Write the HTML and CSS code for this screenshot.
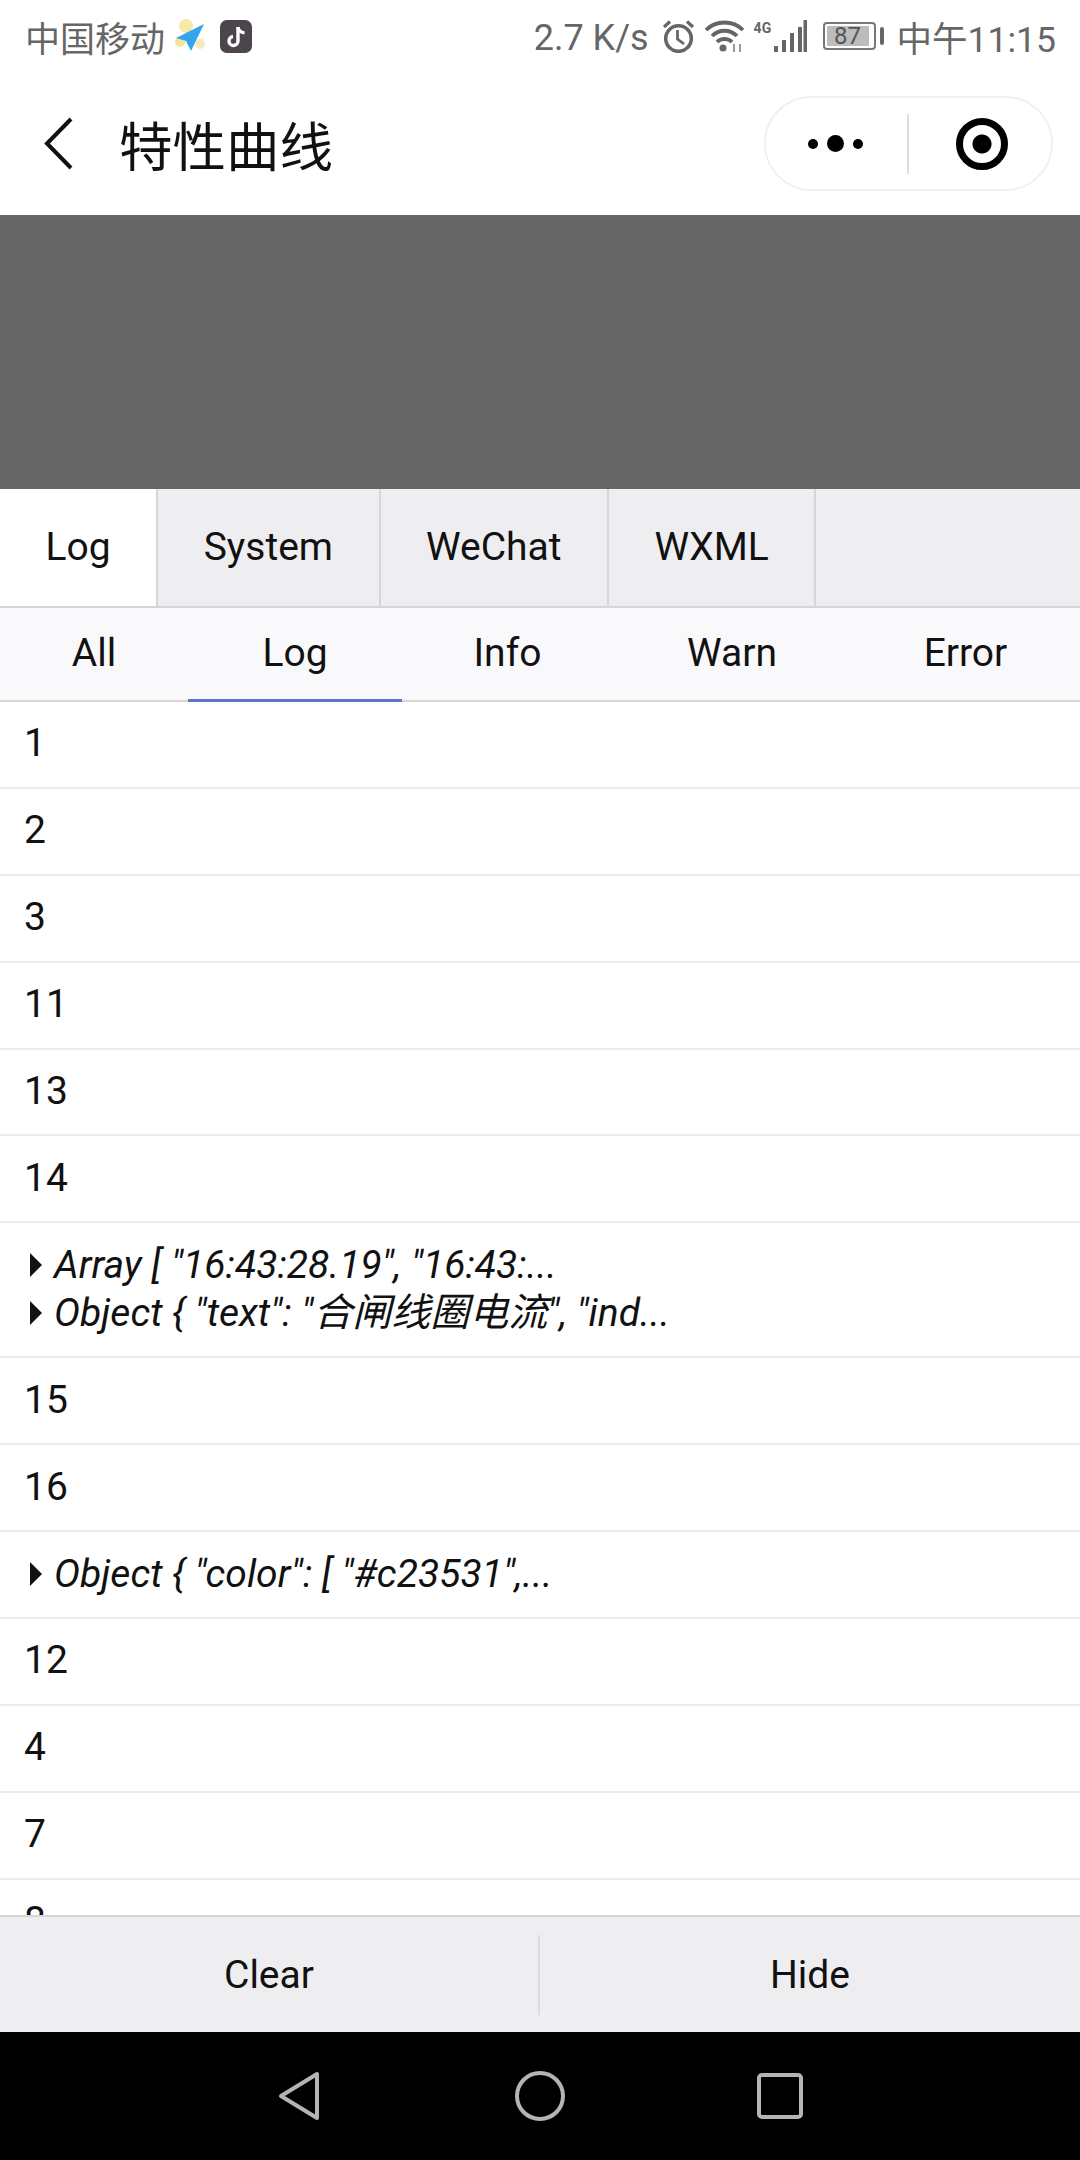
FILE: index.html
```html
<!DOCTYPE html>
<html lang="zh">
<head>
  <meta charset="UTF-8">
  <meta name="viewport" content="width=device-width, initial-scale=1.0">
  <title>特性曲线</title>
  <link rel="stylesheet" href="styles.css">
</head>
<body>
  <header class="status-bar">
    <div class="status-left">
      <span class="carrier">中国移动</span>
      <svg class="icon-plane" viewBox="0 0 30 38">
        <circle cx="11" cy="9" r="7" fill="#f6eaa8"/>
        <circle cx="5" cy="25" r="5" fill="#f5e49a"/>
        <circle cx="25" cy="27" r="5" fill="#f8e8c0"/>
        <path d="M29 7 L1 21 L11 24 L16 34 Z" fill="#35a4ea"/>
      </svg>
      <svg class="icon-tiktok" viewBox="0 0 32 33">
        <rect width="32" height="33" rx="7" fill="#4d454c"/>
        <path d="M18 7 V21 A4.5 4.5 0 1 1 13 16.5" fill="none" stroke="#fff" stroke-width="3.4"/>
        <path d="M18 7 C18.500 10.500 21 12.500 24.500 13" fill="none" stroke="#fff" stroke-width="3.2"/>
      </svg>
    </div>
    <div class="status-right">
      <span class="speed">2.7 K/s</span>
      <svg class="icon-alarm" viewBox="0 0 33 33">
        <circle cx="16.500" cy="18.500" r="12.800" fill="none" stroke="#666" stroke-width="3.600"/>
        <path d="M15.500 10 V19 L22 24" fill="none" stroke="#666" stroke-width="2.800"/>
        <path d="M2 7 L8 1.500 M31 7 L25 1.500" fill="none" stroke="#666" stroke-width="3.200"/>
      </svg>
      <svg class="icon-wifi" viewBox="0 0 41 32">
        <path d="M2 10 C12 0 29 0 39 10 M8 16 C15 9 26 9 33 16 M13 22 C17 18 24 18 28 22" fill="none" stroke="#666" stroke-width="3.800"/>
        <circle cx="19" cy="28" r="3.500" fill="#666"/>
        <path d="M30 24 V32 M36 24 V32" stroke="#999" stroke-width="2"/>
      </svg>
      <div class="signal">
        <span class="net">4G</span>
        <svg class="icon-signal" viewBox="0 0 34 32">
          <path d="M3 26 V32 M11 20 V32 M19 13 V32 M27 7 V32 M32.500 0 V32" stroke="#666" stroke-width="4"/>
        </svg>
      </div>
      <div class="battery">
        <div class="battery-body"><span class="battery-fill">87</span></div>
        <span class="battery-cap"></span>
      </div>
      <span class="clock">中午11:15</span>
    </div>
  </header>

  <nav class="title-bar">
    <div class="title-left">
      <svg class="icon-back" viewBox="0 0 29 53">
        <path d="M27 2 L3 26.500 L27 51" fill="none" stroke="#111" stroke-width="4"/>
      </svg>
      <span class="page-title">特性曲线</span>
    </div>
    <div class="capsule">
      <div class="capsule-part more">
        <span class="dot"></span>
        <span class="dot big"></span>
        <span class="dot"></span>
      </div>
      <span class="capsule-line"></span>
      <div class="capsule-part close">
        <span class="target"></span>
      </div>
    </div>
  </nav>

  <div class="mask"></div>

  <div class="tabs">
    <span class="tab active">Log</span>
    <span class="tab">System</span>
    <span class="tab">WeChat</span>
    <span class="tab">WXML</span>
  </div>

  <div class="subtabs">
    <span class="subtab">All</span>
    <span class="subtab active">Log</span>
    <span class="subtab">Info</span>
    <span class="subtab">Warn</span>
    <span class="subtab">Error</span>
  </div>

  <ul class="logs">
    <li>1</li>
    <li>2</li>
    <li>3</li>
    <li>11</li>
    <li>13</li>
    <li>14</li>
    <li class="multi">
      <div class="fold">Array [ "16:43:28.19", "16:43:...</div>
      <div class="fold">Object { "text": "合闸线圈电流", "ind...</div>
    </li>
    <li>15</li>
    <li>16</li>
    <li><div class="fold">Object { "color": [ "#c23531",...</div></li>
    <li>12</li>
    <li>4</li>
    <li>7</li>
    <li>8</li>
  </ul>

  <div class="actions">
    <span class="action">Clear</span>
    <span class="action">Hide</span>
  </div>

  <footer class="nav-keys">
    <svg class="key-back" viewBox="0 0 42 50">
      <path d="M39 3 V47 L3 25 Z" fill="none" stroke="#b4b4b4" stroke-width="4" stroke-linejoin="round"/>
    </svg>
    <svg class="key-home" viewBox="0 0 50 50">
      <circle cx="25" cy="25" r="23" fill="none" stroke="#b4b4b4" stroke-width="4"/>
    </svg>
    <svg class="key-recent" viewBox="0 0 46 46">
      <rect x="2" y="2" width="42" height="42" rx="3" fill="none" stroke="#b4b4b4" stroke-width="4"/>
    </svg>
  </footer>
</body>
</html>
```

FILE: styles.css
```css
* {
  margin: 0px;
  padding: 0px;
  box-sizing: border-box;
}
html, body {
  width: 1080px;
  height: 2160px;
  overflow: hidden;
}
body {
  display: flex;
  flex-direction: column;
  background-color: white;
  color: #111;
  font-family: Roboto, "Noto Sans CJK SC", sans-serif;
  font-size: 39px;
}
ul {list-style-type: none;}
svg {display: block;}

/* status bar */
.status-bar {
  height: 72px;
  flex: none;
  display: flex;
  justify-content: space-between;
  align-items: center;
  padding: 0px 24px 0px 25px;
  color: #666;
  font-size: 35px;
}
.status-left, .status-right {
  display: flex;
  align-items: center;
}
.icon-plane {
  width: 30px;
  height: 38px;
  margin-left: 10px;
}
.icon-tiktok {
  width: 32px;
  height: 33px;
  margin-left: 15px;
}
.speed {
  font-size: 36px;
  margin-top: 3px;
}
.icon-alarm {
  width: 33px;
  height: 33px;
  margin-left: 13px;
}
.icon-wifi {
  width: 41px;
  height: 32px;
  margin-left: 9px;
}
.signal {
  display: flex;
  margin-left: 9px;
}
.net {
  width: 19px;
  height: 32px;
  font-size: 14px;
  font-weight: 700;
  line-height: 16px;
}
.icon-signal {
  width: 34px;
  height: 32px;
}
.battery {
  display: flex;
  align-items: center;
  margin-left: 16px;
}
.battery-body {
  width: 53px;
  height: 28px;
  border: 2px solid #777;
  border-radius: 4px;
  padding: 2px;
}
.battery-fill {
  display: block;
  width: 42px;
  height: 20px;
  background-color: #bcbcbc;
  font-size: 24px;
  line-height: 20px;
  text-align: center;
  color: #555;
}
.battery-cap {
  width: 4px;
  height: 18px;
  margin-left: 4px;
  background-color: #666;
  border-radius: 2px;
}
.clock {
  margin-left: 13px;
  font-size: 35.5px;
}

/* title bar */
.title-bar {
  height: 143px;
  flex: none;
  display: flex;
  justify-content: space-between;
  align-items: center;
  padding: 0px 27px 0px 44px;
}
.title-left {
  display: flex;
  align-items: center;
}
.icon-back {
  width: 29px;
  height: 53px;
}
.page-title {
  margin-left: 46px;
  font-family: "Noto Sans CJK SC", sans-serif;
  font-size: 53.5px;
  line-height: 60px;
}
.capsule {
  width: 289px;
  height: 95px;
  display: flex;
  align-items: center;
  border: 2px solid #f0f0f0;
  border-radius: 48px;
}
.capsule-part {
  display: flex;
  justify-content: center;
  align-items: center;
  gap: 9px;
}
.capsule-part.more {
  width: 141px;
  padding-right: 2px;
}
.capsule-part.close {
  width: 142px;
  padding-left: 4px;
}
.capsule-line {
  width: 2px;
  height: 60px;
  background-color: #dedede;
}
.dot {
  width: 10px;
  height: 10px;
  border-radius: 50%;
  background-color: black;
}
.dot.big {
  width: 17px;
  height: 17px;
}
.target {
  width: 52px;
  height: 52px;
  border: 7px solid black;
  border-radius: 50%;
  background: radial-gradient(circle, black 0 9px, white 10px);
}

.mask {
  height: 274px;
  flex: none;
  background-color: #666667;
}

/* top tabs */
.tabs {
  height: 119px;
  flex: none;
  display: flex;
  background-color: #eeeef1;
  border-bottom: 2px solid #d6d6d9;
}
.tab {
  padding: 0px 45.5px;
  line-height: 117px;
  border-right: 2px solid #d6d6d9;
}
.tab.active {background-color: white;}

.subtabs {
  height: 94px;
  flex: none;
  display: grid;
  grid-template-columns: 188px 214px 211px 238px 229px;
  background-color: #f9f9fc;
  border-bottom: 2px solid #d6d6d9;
}
.subtab {
  height: 94px;
  line-height: 90px;
  text-align: center;
}
.subtab.active {border-bottom: 3px solid #5a76c6;}

/* log list */
.logs {
  flex: 1;
  overflow: hidden;
}
.logs > li {
  height: 86.9px;
  padding: 0px 24px 2px;
  display: flex;
  flex-direction: column;
  justify-content: center;
  border-bottom: 2px solid #ececec;
}
.logs > li.multi {height: 135px;}
.fold {
  position: relative;
  padding-left: 30px;
  font-style: italic;
  line-height: 48px;
}
.fold::before {
  content: "";
  position: absolute;
  left: 6px;
  top: 12px;
  border-left: 12px solid #111;
  border-top: 12px solid transparent;
  border-bottom: 12px solid transparent;
}

/* bottom buttons */
.actions {
  height: 117px;
  flex: none;
  display: flex;
  align-items: center;
  background-color: #eeeef1;
  border-top: 2px solid #d6d6d9;
}
.action {
  flex: 1;
  height: 80px;
  line-height: 80px;
  text-align: center;
}
.action:first-child {
  flex: none;
  width: 540px;
  border-right: 2px solid #dcdcdf;
}

.nav-keys {
  height: 128px;
  flex: none;
  display: flex;
  justify-content: center;
  align-items: center;
  background-color: black;
}
.key-back {
  width: 42px;
  height: 50px;
}
.key-home {
  width: 50px;
  height: 50px;
  margin-left: 195px;
}
.key-recent {
  width: 46px;
  height: 46px;
  margin-left: 192px;
}
```
